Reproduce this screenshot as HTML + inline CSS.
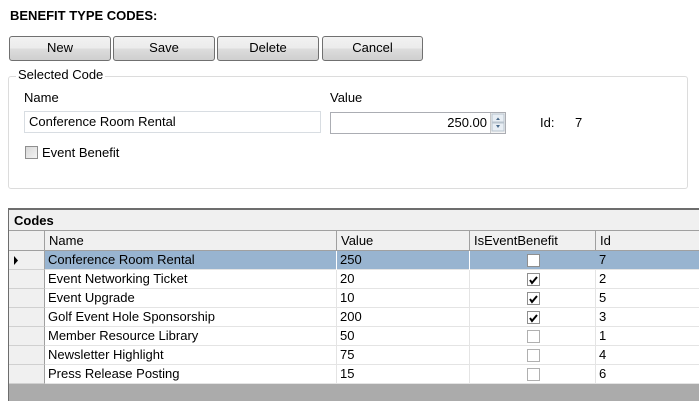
<!DOCTYPE html>
<html><head><meta charset="utf-8"><style>
*{margin:0;padding:0;box-sizing:border-box}
body{width:699px;height:401px;background:#fff;font-family:"Liberation Sans",Arial,sans-serif;font-size:13px;color:#000;position:relative;overflow:hidden}
.a{position:absolute;white-space:nowrap}
.btn{position:absolute;top:36px;height:25px;border:1px solid #707070;border-radius:3px;background:linear-gradient(#f2f2f2,#ebebeb 50%,#dddddd 51%,#cfcfcf);text-align:center;line-height:22px;font-size:13px}
.fs{position:absolute;left:8px;top:76px;width:680px;height:113px;border:1px solid #dcdcdc;border-radius:3px}
.inp{position:absolute;border:1px solid #abadb3;background:#fff;height:22px;line-height:20px;padding:0 4px}
.grid{position:absolute;left:8px;top:208px;width:691px;height:193px;background:#ababab;border-top:2px solid #6d6d6d;border-left:1px solid #6d6d6d}
.cap{position:absolute;left:0;top:0;width:100%;height:21px;background:#f0f0f0;font-weight:bold;padding-left:5px;line-height:21px;border-bottom:1px solid #a0a0a0}
.row{position:absolute;left:0;width:100%;height:19px;background:#fff;border-bottom:1px solid #e4e4e4}
.rh{position:absolute;left:0;top:0;width:36px;height:19px;background:#f0f0f0;border-right:1px solid #a0a0a0;border-bottom:1px solid #d0d0d0}
.c{position:absolute;top:0;height:19px;line-height:18px;padding-left:3px;border-right:1px solid #e4e4e4}
.hd .c{border-right:1px solid #a0a0a0;line-height:19px;padding-left:4px}
.cb{position:absolute;left:518px;top:3px;width:13px;height:13px;border:1px solid #8f8f8f;background:#fff}
</style></head><body>
<div class="a" style="left:10px;top:8px;font-weight:bold;font-size:13px">BENEFIT TYPE CODES:</div>
<div class="btn" style="left:9px;width:102px">New</div>
<div class="btn" style="left:113px;width:102px">Save</div>
<div class="btn" style="left:217px;width:102px">Delete</div>
<div class="btn" style="left:322px;width:101px">Cancel</div>
<div class="fs"></div>
<div class="a" style="left:16px;top:68px;background:#fff;padding:0 2px;line-height:14px">Selected Code</div>
<div class="a" style="left:24px;top:90px">Name</div>
<div class="a" style="left:330px;top:90px">Value</div>
<div class="inp" style="left:24px;top:111px;width:297px;border-color:#d8dde2">Conference Room Rental</div>
<div class="inp" style="left:330px;top:112px;width:176px;text-align:right;padding-right:18px">250.00</div>
<div class="a" style="left:490px;top:113px;width:15px;height:20px;background:#f4f4f4;border-left:1px solid #c8c8c8">
<svg width="15" height="20"><rect x="1" y="1" width="12" height="8" fill="#e8eef4" stroke="#b9c4ce"/><rect x="1" y="10" width="12" height="8" fill="#e8eef4" stroke="#b9c4ce"/><path d="M5 7 L7 4.5 L9 7Z" fill="#4a6a8a"/><path d="M5 12 L7 15 L9 12Z" fill="#4a6a8a"/></svg></div>
<div class="a" style="left:540px;top:115px">Id:</div>
<div class="a" style="left:575px;top:115px">7</div>
<div class="a" style="left:25px;top:146px;width:13px;height:13px;border:1px solid #8f8f8f;background:linear-gradient(135deg,#d8d8d8,#f4f4f4)"></div>
<div class="a" style="left:42px;top:145px">Event Benefit</div>

<div class="grid">
<div class="cap">Codes</div>
<div class="row hd" style="top:21px;background:#f0f0f0;height:20px;border-bottom:1px solid #a0a0a0">
<div class="rh" style="height:19px;border-bottom:none"></div>
<div class="c" style="left:36px;width:292px;height:19px">Name</div>
<div class="c" style="left:328px;width:133px;height:19px">Value</div>
<div class="c" style="left:461px;width:126px;height:19px">IsEventBenefit</div>
<div class="c" style="left:587px;width:104px;height:19px;border:none">Id</div>
</div>
<div class="row" style="top:41px;background:#98b4d0">
<div class="rh"><svg width="36" height="19"><path d="M5 5 L9 9.5 L5 14Z" fill="#000"/></svg></div>
<div class="c" style="left:36px;width:292px;border-color:#fff">Conference Room Rental</div>
<div class="c" style="left:328px;width:133px;border-color:#fff">250</div>
<div class="cb"></div>
<div class="c" style="left:587px;width:104px;border:none">7</div>
</div>
<div class="row" style="top:60px"><div class="rh"></div><div class="c" style="left:36px;width:292px">Event Networking Ticket</div><div class="c" style="left:328px;width:133px">20</div><div class="c" style="left:461px;width:126px"></div><div class="cb"><svg width="11" height="11"><path d="M2 5 L4 8 L9 2" stroke="#000" stroke-width="2" fill="none"/></svg></div><div class="c" style="left:587px;border:none">2</div></div>
<div class="row" style="top:79px"><div class="rh"></div><div class="c" style="left:36px;width:292px">Event Upgrade</div><div class="c" style="left:328px;width:133px">10</div><div class="c" style="left:461px;width:126px"></div><div class="cb"><svg width="11" height="11"><path d="M2 5 L4 8 L9 2" stroke="#000" stroke-width="2" fill="none"/></svg></div><div class="c" style="left:587px;border:none">5</div></div>
<div class="row" style="top:98px"><div class="rh"></div><div class="c" style="left:36px;width:292px">Golf Event Hole Sponsorship</div><div class="c" style="left:328px;width:133px">200</div><div class="c" style="left:461px;width:126px"></div><div class="cb"><svg width="11" height="11"><path d="M2 5 L4 8 L9 2" stroke="#000" stroke-width="2" fill="none"/></svg></div><div class="c" style="left:587px;border:none">3</div></div>
<div class="row" style="top:117px"><div class="rh"></div><div class="c" style="left:36px;width:292px">Member Resource Library</div><div class="c" style="left:328px;width:133px">50</div><div class="c" style="left:461px;width:126px"></div><div class="cb" style="border-color:#b0b0b0"></div><div class="c" style="left:587px;border:none">1</div></div>
<div class="row" style="top:136px"><div class="rh"></div><div class="c" style="left:36px;width:292px">Newsletter Highlight</div><div class="c" style="left:328px;width:133px">75</div><div class="c" style="left:461px;width:126px"></div><div class="cb" style="border-color:#b0b0b0"></div><div class="c" style="left:587px;border:none">4</div></div>
<div class="row" style="top:155px"><div class="rh"></div><div class="c" style="left:36px;width:292px">Press Release Posting</div><div class="c" style="left:328px;width:133px">15</div><div class="c" style="left:461px;width:126px"></div><div class="cb" style="border-color:#b0b0b0"></div><div class="c" style="left:587px;border:none">6</div></div>
</div>
</body></html>
